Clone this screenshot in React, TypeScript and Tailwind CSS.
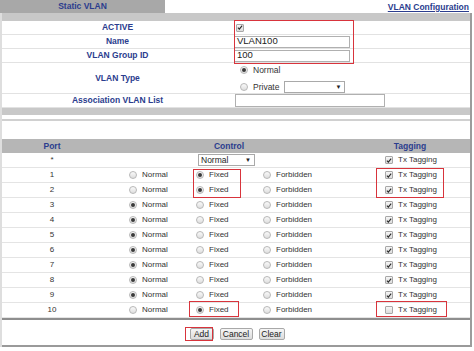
import React from "react";

const blue = "text-[#2b3d8e]";

function Radio({ on }: { on?: boolean }) {
  return (
    <span className="flex h-[8px] w-[8px] shrink-0 items-center justify-center rounded-full border border-[#b8b8b8] bg-gradient-to-b from-[#fafafa] to-[#dedede]">
      {on && <span className="h-[4px] w-[4px] rounded-full bg-[#3a3a3a]" />}
    </span>
  );
}

function Check({ on }: { on?: boolean }) {
  return (
    <span className="flex h-[8px] w-[8px] shrink-0 items-center justify-center rounded-[1px] border border-[#a8a8a8] bg-gradient-to-b from-[#f6f6f6] to-[#dcdcdc]">
      {on && (
        <svg viewBox="0 0 8 8" className="h-[7px] w-[7px]">
          <path d="M1.2 4.2 L3.1 6.1 L6.9 1.4" fill="none" stroke="#2a2a2a" strokeWidth="1.5" />
        </svg>
      )}
    </span>
  );
}

function Select({ value, w }: { value: string; w: string }) {
  return (
    <div className={`flex h-[12px] ${w} items-center justify-between border border-[#a9a9a9] bg-white pl-[2px] pr-[3px] text-[8.5px] text-[#222]`}>
      <span>{value}</span>
      <span className="text-[6px] leading-none">▼</span>
    </div>
  );
}

function TopRow({ label, h, children }: { label: string; h: string; children?: React.ReactNode }) {
  return (
    <div className={`flex ${h} border-b border-[#e2e2e2]`}>
      <div className={`flex w-[231px] items-center justify-center text-[8.5px] font-bold ${blue}`}>{label}</div>
      <div className="flex flex-1 items-center">{children}</div>
    </div>
  );
}

const ports = [
  { p: "1", ctl: "fixed", tag: true },
  { p: "2", ctl: "fixed", tag: true },
  { p: "3", ctl: "normal", tag: true },
  { p: "4", ctl: "normal", tag: true },
  { p: "5", ctl: "normal", tag: true },
  { p: "6", ctl: "normal", tag: true },
  { p: "7", ctl: "normal", tag: true },
  { p: "8", ctl: "normal", tag: true },
  { p: "9", ctl: "normal", tag: true },
  { p: "10", ctl: "fixed", tag: false },
];

export default function App() {
  return (
    <div className="relative h-[351px] w-[474px] overflow-hidden bg-white font-['Liberation_Sans',Arial,sans-serif] text-[#333]">
      {/* tab bar */}
      <div className="flex h-[13px]">
        <div className={`flex w-[165px] items-center justify-center bg-[#a8a8a8] text-[8.5px] font-bold ${blue}`}>
          Static VLAN
        </div>
        <div className="flex flex-1 items-end justify-end pr-[5px]">
          <span className={`text-[8.5px] font-bold leading-[11px] underline ${blue}`}>VLAN Configuration</span>
        </div>
      </div>

      <div className="mr-[2px] border-l-2 border-r-2 border-l-[#dedede] border-r-[#9c9c9c]">
        <div className="h-[8px] bg-[#c8c8c8]" />
        <TopRow label="ACTIVE" h="h-[14px]">
          <div className="pl-[3px]">
            <Check on />
          </div>
        </TopRow>
        <TopRow label="Name" h="h-[14px]">
          <div className="ml-[1px] flex h-[12px] w-[116px] items-center border border-[#b0b0b0] pl-[2px] text-[9.5px] text-[#222]">
            VLAN100
          </div>
        </TopRow>
        <TopRow label="VLAN Group ID" h="h-[14px]">
          <div className="ml-[1px] flex h-[12px] w-[116px] items-center border border-[#b0b0b0] pl-[2px] text-[9.5px] text-[#222]">
            100
          </div>
        </TopRow>
        <TopRow label="VLAN Type" h="h-[31px]">
          <div className="flex flex-col gap-[4px] pl-[7px] pt-[1px] text-[8.5px] text-[#333]">
            <div className="flex items-center gap-[5px]">
              <Radio on />
              <span>Normal</span>
            </div>
            <div className="flex items-center gap-[5px]">
              <Radio />
              <span>Private</span>
              <Select value="" w="w-[61px]" />
            </div>
          </div>
        </TopRow>
        <TopRow label="Association VLAN List" h="h-[14px]">
          <div className="ml-[2px] h-[13px] w-[150px] border border-[#b0b0b0]" />
        </TopRow>
        <div className="h-[7px] bg-[#c8c8c8]" />

        <div className="h-[24px] pt-[4px]">
          <div className="h-[2px] bg-[#d0d0d0]" />
        </div>

        {/* port table */}
        <div className={`flex h-[14px] items-center bg-[#b6b6b6] text-[8.5px] font-bold ${blue}`}>
          <div className="w-[100px] text-center">Port</div>
          <div className="w-[254px] text-center">Control</div>
          <div className="flex-1 pr-[6px] text-center">Tagging</div>
        </div>
        <div className="flex h-[15px] items-center border-b border-[#e4e4e4] text-[8px]">
          <div className="w-[100px] text-center">*</div>
          <div className="w-[96px]" />
          <Select value="Normal" w="w-[57px]" />
          <div className="w-[126px]" />
          <div className="flex items-center gap-[5px] pl-[4px]">
            <Check on />
            <span>Tx Tagging</span>
          </div>
        </div>
        {ports.map((r) => (
          <div key={r.p} className="flex h-[15px] items-center border-b border-[#e4e4e4] text-[8px] text-[#333]">
            <div className="w-[100px] text-center">{r.p}</div>
            <div className="flex w-[92px] items-center gap-[5px] pl-[27px]">
              <Radio on={r.ctl === "normal"} />
              <span>Normal</span>
            </div>
            <div className="flex w-[67px] items-center gap-[5px] pl-[2px]">
              <Radio on={r.ctl === "fixed"} />
              <span>Fixed</span>
            </div>
            <div className="flex w-[120px] items-center gap-[5px] pl-[2px]">
              <Radio />
              <span>Forbidden</span>
            </div>
            <div className="flex items-center gap-[5px] pl-[4px]">
              <Check on={r.tag} />
              <span>Tx Tagging</span>
            </div>
          </div>
        ))}
        <div className="h-[2px] bg-[#8e8e8e]" />
        <div className="flex h-[25px] justify-center gap-[6px] pl-[2px] pt-[8px]">
          <button className="h-[12px] w-[24px] rounded-[2px] border border-[#a8a8a8] bg-gradient-to-b from-[#f6f6f6] to-[#dcdcdc] text-[8.5px] leading-none text-[#222]">
            Add
          </button>
          <button className="h-[12px] w-[33px] rounded-[2px] border border-[#a8a8a8] bg-gradient-to-b from-[#f6f6f6] to-[#dcdcdc] text-[8.5px] leading-none text-[#222]">
            Cancel
          </button>
          <button className="h-[12px] w-[26px] rounded-[2px] border border-[#a8a8a8] bg-gradient-to-b from-[#f6f6f6] to-[#dcdcdc] text-[8.5px] leading-none text-[#222]">
            Clear
          </button>
        </div>
        <div className="h-[2px] bg-[#9a9a9a]" />
      </div>

      {/* red highlight boxes */}
      <div className="absolute left-[234px] top-[20px] h-[44px] w-[120px] border-[1.5px] border-[#d8343c]" />
      <div className="absolute left-[193px] top-[169px] h-[29px] w-[48px] border-[1.5px] border-[#d8343c]" />
      <div className="absolute left-[376px] top-[168px] h-[30px] w-[68px] border-[1.5px] border-[#d8343c]" />
      <div className="absolute left-[189px] top-[301px] h-[16px] w-[50px] border-[1.5px] border-[#d8343c]" />
      <div className="absolute left-[376px] top-[301px] h-[16px] w-[71px] border-[1.5px] border-[#d8343c]" />
      <div className="absolute left-[185px] top-[327px] h-[14px] w-[28px] border-[1.5px] border-[#d8343c]" />
    </div>
  );
}
